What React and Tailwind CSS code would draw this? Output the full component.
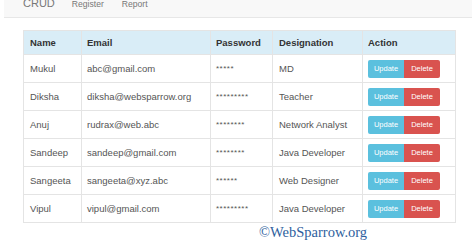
const people = [
  { name: 'Mukul', email: 'abc@gmail.com', password: '*****', role: 'MD' },
  { name: 'Diksha', email: 'diksha@websparrow.org', password: '*********', role: 'Teacher' },
  { name: 'Anuj', email: 'rudrax@web.abc', password: '********', role: 'Network Analyst' },
  { name: 'Sandeep', email: 'sandeep@gmail.com', password: '********', role: 'Java Developer' },
  { name: 'Sangeeta', email: 'sangeeta@xyz.abc', password: '******', role: 'Web Designer' },
  { name: 'Vipul', email: 'vipul@gmail.com', password: '*********', role: 'Java Developer' },
]

export default function App() {
  return (
    <div className="w-[474px] h-[248px] bg-white overflow-hidden font-['Liberation_Sans',Arial,sans-serif] text-[#555]">
      {/* navbar */}
      <div className="ml-[4px] mr-[2px] h-[18px] bg-[#f8f8f8] border-b border-[#e7e7e7] flex items-end pb-[8px] pl-[19px] text-[#777]">
        <span className="text-[11px] leading-none">CRUD</span>
        <span className="ml-[17px] text-[8.6px] leading-none">Register</span>
        <span className="ml-[18px] text-[8.6px] leading-none">Report</span>
      </div>

      <div className="pl-[23px] pt-[12px]">
        <table className="border-collapse text-[9.5px] leading-none">
          <thead>
            <tr className="h-[24px] bg-[#d9edf7] text-[#333] font-bold">
              <th className="w-[58px] text-left px-[6px] border border-[#e4e4e4]">Name</th>
              <th className="w-[129px] text-left px-[5px] border border-[#e4e4e4]">Email</th>
              <th className="w-[62px] text-left px-[5px] border border-[#e4e4e4]">Password</th>
              <th className="w-[90px] text-left px-[6px] border border-[#e4e4e4]">Designation</th>
              <th className="w-[93px] text-left px-[5px] border border-[#e4e4e4]">Action</th>
            </tr>
          </thead>
          <tbody>
            {people.map((p) => (
              <tr key={p.name} className="h-[28px]">
                <td className="px-[6px] border border-[#e4e4e4]">{p.name}</td>
                <td className="px-[5px] border border-[#e4e4e4]">{p.email}</td>
                <td className="px-[5px] border border-[#e4e4e4] text-[8px] tracking-[0.5px]">{p.password}</td>
                <td className="px-[6px] border border-[#e4e4e4]">{p.role}</td>
                <td className="px-[5px] border border-[#e4e4e4]">
                  <div className="flex">
                    <button className="w-[36px] h-[18px] bg-[#5bc0de] text-white text-[7.5px] rounded-l-[2px]">
                      Update
                    </button>
                    <button className="w-[36px] h-[18px] bg-[#d9534f] text-white text-[7.5px] rounded-r-[2px]">
                      Delete
                    </button>
                  </div>
                </td>
              </tr>
            ))}
          </tbody>
        </table>
        <div className="pl-[236px] pt-[2px] text-[14.5px] leading-none text-[#2f5f9e] font-['Liberation_Serif',serif]">
          ©WebSparrow.org
        </div>
      </div>
    </div>
  )
}
